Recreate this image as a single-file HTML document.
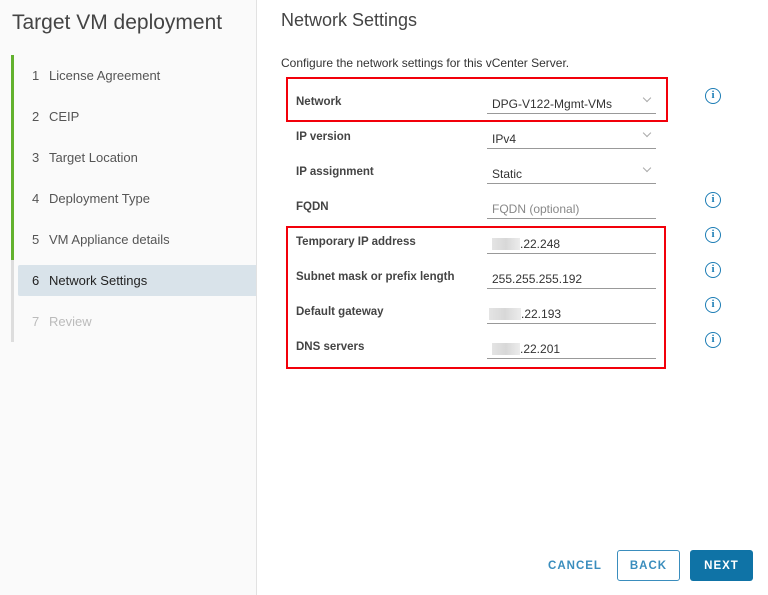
<!DOCTYPE html>
<html><head><style>
*{margin:0;padding:0;box-sizing:border-box}
body{width:768px;height:595px;font-family:"Liberation Sans",sans-serif;background:#fff;position:relative;overflow:hidden;color:#333}
.side{position:absolute;left:0;top:0;width:257px;height:595px;background:#fafafa;border-right:1px solid #e2e2e2}
.side h1{position:absolute;left:12px;top:11px;font-size:21px;font-weight:normal;color:#444}
.bar{position:absolute;left:11px;width:3px}
.step{position:absolute;left:32px;font-size:13px;color:#555}
.step span{display:inline-block;width:17px}
.act{position:absolute;left:18px;top:265px;width:238px;height:31px;background:#d9e3ea;border-radius:2px 0 0 2px}
.abs{position:absolute}
.lbl{position:absolute;left:296px;font-size:11.5px;font-weight:bold;color:#444}
.inp{position:absolute;left:487px;width:169px;height:22px;border-bottom:1px solid #999;font-size:12px;color:#333;padding:5px 0 0 5px}
.chev{position:absolute;right:6px;top:3px;width:6px;height:6px;border-right:1px solid #aaa;border-bottom:1px solid #aaa;transform:rotate(45deg)}
.info{position:absolute;left:705px;width:16px;height:16px;border:1.5px solid #1d7db5;border-radius:50%;color:#1d7db5;font-family:"Liberation Serif",serif;font-weight:bold;font-size:11px;text-align:center;line-height:13px}
.blur{display:inline-block;width:28px;height:12px;background:linear-gradient(90deg,#e4e4e4,#d8d8d8,#ececec);vertical-align:-2px}
.red{position:absolute;border:2px solid #f2000a}
.btn{position:absolute;top:550px;height:31px;font-size:11.5px;font-weight:bold;letter-spacing:1px;text-align:center;line-height:33px;border-radius:3px}
</style></head><body>
<div class="side">
<h1>Target VM deployment</h1>
<div class="bar" style="top:55px;height:205px;background:#62b12e"></div>
<div class="bar" style="top:260px;height:82px;background:#ddd"></div>
<div class="act"></div>
<div class="step" style="top:68px"><span>1</span>License Agreement</div>
<div class="step" style="top:109px"><span>2</span>CEIP</div>
<div class="step" style="top:150px"><span>3</span>Target Location</div>
<div class="step" style="top:191px"><span>4</span>Deployment Type</div>
<div class="step" style="top:232px"><span>5</span>VM Appliance details</div>
<div class="step" style="top:273px;color:#222"><span>6</span>Network Settings</div>
<div class="step" style="top:314px;color:#bbb"><span>7</span>Review</div>
</div>
<div class="abs" style="left:281px;top:10px;font-size:18px;color:#444">Network Settings</div>
<div class="abs" style="left:281px;top:56px;font-size:12px;color:#333">Configure the network settings for this vCenter Server.</div>

<div class="red" style="left:286px;top:77px;width:382px;height:45px"></div>
<div class="red" style="left:286px;top:226px;width:380px;height:143px"></div>

<div class="lbl" style="top:96px">Network</div>
<div class="inp" style="top:92px">DPG-V122-Mgmt-VMs<i class="chev"></i></div>
<div class="lbl" style="top:131px">IP version</div>
<div class="inp" style="top:127px">IPv4<i class="chev"></i></div>
<div class="lbl" style="top:166px">IP assignment</div>
<div class="inp" style="top:162px">Static<i class="chev"></i></div>
<div class="lbl" style="top:201px">FQDN</div>
<div class="inp" style="top:197px;color:#888">FQDN (optional)</div>
<div class="lbl" style="top:236px">Temporary IP address</div>
<div class="inp" style="top:232px"><span class="blur"></span>.22.248</div>
<div class="lbl" style="top:271px">Subnet mask or prefix length</div>
<div class="inp" style="top:267px">255.255.255.192</div>
<div class="lbl" style="top:306px">Default gateway</div>
<div class="inp" style="top:302px"><span class="blur" style="width:32px;margin-left:-3px"></span>.22.193</div>
<div class="lbl" style="top:341px">DNS servers</div>
<div class="inp" style="top:337px"><span class="blur"></span>.22.201</div>

<div class="info" style="top:88px">i</div>
<div class="info" style="top:192px">i</div>
<div class="info" style="top:227px">i</div>
<div class="info" style="top:262px">i</div>
<div class="info" style="top:297px">i</div>
<div class="info" style="top:332px">i</div>

<div class="btn" style="left:545px;width:60px;color:#3a8dbd">CANCEL</div>
<div class="btn" style="left:617px;width:63px;border:1px solid #3a8dbd;color:#3a8dbd;line-height:31px">BACK</div>
<div class="btn" style="left:690px;width:63px;background:#0f73a6;color:#fff">NEXT</div>
</body></html>
